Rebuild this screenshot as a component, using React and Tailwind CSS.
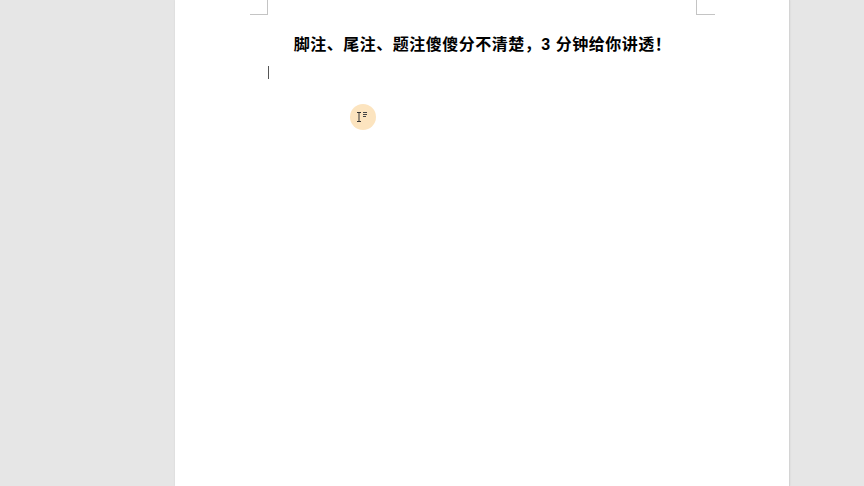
export default function App() {
  return (
    <div className="w-[864px] h-[486px] overflow-hidden bg-[#e6e6e6] flex" style={{ fontFamily: '"Liberation Sans", "Noto Sans CJK SC", sans-serif' }}>
      <div className="ml-[175px] w-[615px] h-full bg-white border-r border-[#d4d4d4] shadow-[0_0_2px_rgba(0,0,0,0.08)] pl-[75px] pr-[74px] flex flex-col">
        <div className="flex justify-between">
          <div className="w-[18px] h-[15px] border-r border-b border-[#c4c4c4]" />
          <div className="w-[19px] h-[15px] border-l border-b border-[#c4c4c4]" />
        </div>
        <div className="mt-[18px] text-[16px] leading-[24px] font-bold text-black text-center tracking-[0.5px]">
          脚注、尾注、题注傻傻分不清楚，3 分钟给你讲透！
        </div>
        <div className="mt-[9px] ml-[18px] w-px h-[13px] bg-[#555]" />
        <div className="mt-[25px] ml-[100px] w-[26px] h-[26px] rounded-full bg-[#fce4bf] flex items-center justify-center">
          <svg width="16" height="12" viewBox="0 0 16 12">
            <path d="M2 1.5h4M4 1.5v9M2 10.5h4" stroke="#333" strokeWidth="1" fill="none" />
            <path d="M8 1.5h4M8 3.5h4M8 5.5h3" stroke="#444" strokeWidth="1" fill="none" />
          </svg>
        </div>
      </div>
    </div>
  );
}
